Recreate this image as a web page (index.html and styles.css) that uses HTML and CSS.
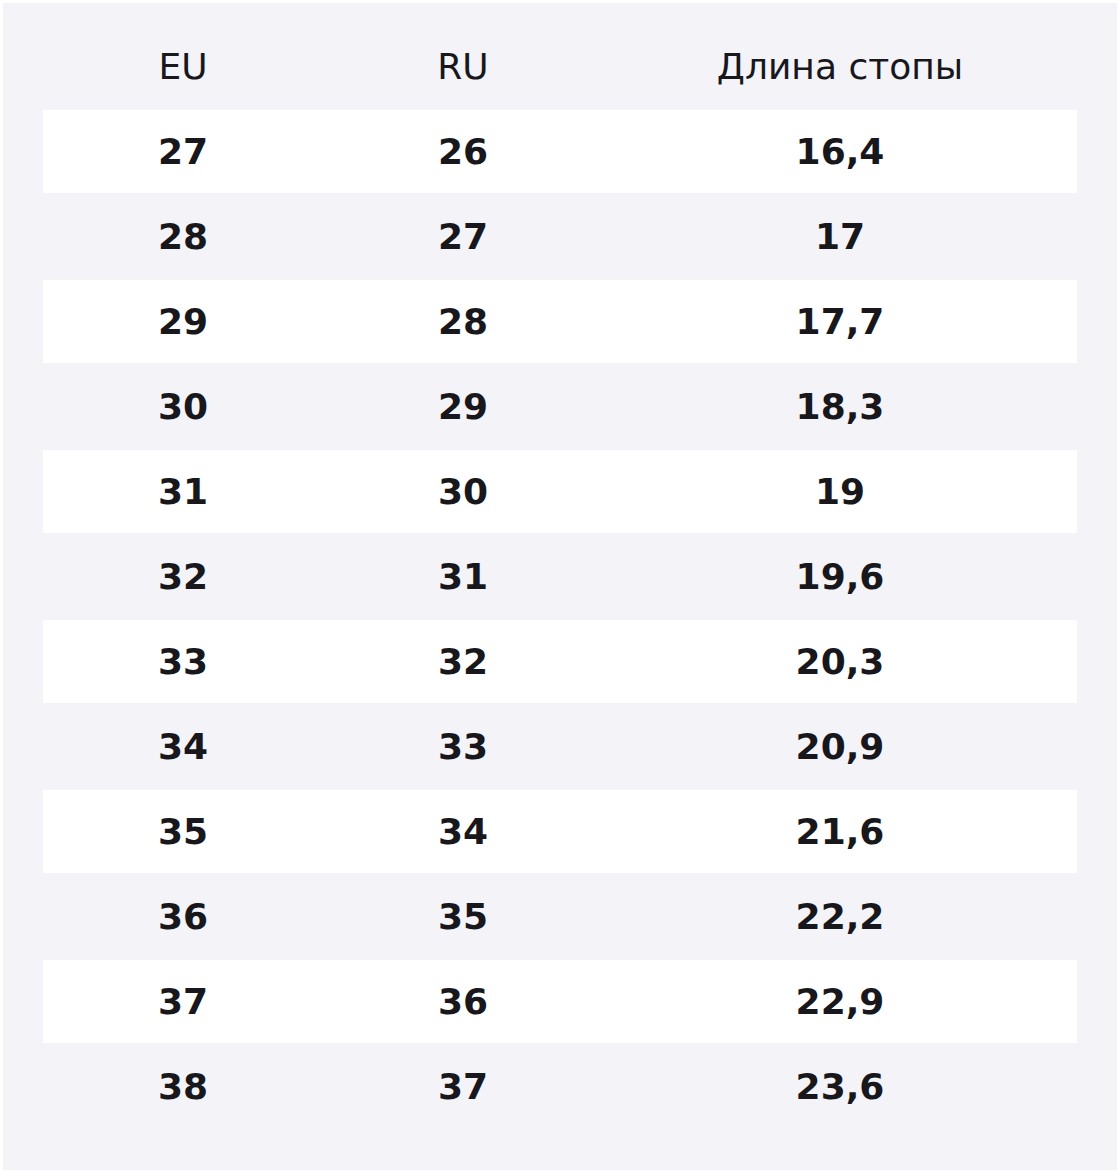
FILE: index.html
```html
<!DOCTYPE html>
<html lang="ru">
<head>
<meta charset="utf-8">
<title>Таблица размеров</title>
<link rel="stylesheet" href="styles.css">
</head>
<body>
<div class="panel">
  <div class="row head">
    <div class="cell">EU</div>
    <div class="cell">RU</div>
    <div class="cell">Длина стопы</div>
  </div>
  <div class="row white"><div class="cell">27</div><div class="cell">26</div><div class="cell">16,4</div></div>
  <div class="row"><div class="cell">28</div><div class="cell">27</div><div class="cell">17</div></div>
  <div class="row white"><div class="cell">29</div><div class="cell">28</div><div class="cell">17,7</div></div>
  <div class="row"><div class="cell">30</div><div class="cell">29</div><div class="cell">18,3</div></div>
  <div class="row white"><div class="cell">31</div><div class="cell">30</div><div class="cell">19</div></div>
  <div class="row"><div class="cell">32</div><div class="cell">31</div><div class="cell">19,6</div></div>
  <div class="row white"><div class="cell">33</div><div class="cell">32</div><div class="cell">20,3</div></div>
  <div class="row"><div class="cell">34</div><div class="cell">33</div><div class="cell">20,9</div></div>
  <div class="row white"><div class="cell">35</div><div class="cell">34</div><div class="cell">21,6</div></div>
  <div class="row"><div class="cell">36</div><div class="cell">35</div><div class="cell">22,2</div></div>
  <div class="row white"><div class="cell">37</div><div class="cell">36</div><div class="cell">22,9</div></div>
  <div class="row"><div class="cell">38</div><div class="cell">37</div><div class="cell">23,6</div></div>
</div>
</body>
</html>
```
FILE: styles.css
```css
html, body {
  background: #ffffff;
}
body {
  margin: 3px;
  font-family: "DejaVu Sans", Verdana, sans-serif;
  color: #17171c;
}
.panel {
  background: #f3f3f8;
  padding: 40px 40px 41px;
  display: flex;
  flex-direction: column;
}
.row {
  display: grid;
  grid-template-columns: 280px 280px 1fr;
  align-items: center;
  height: 85px;
  box-sizing: border-box;
  padding: 1px 0;
  background-clip: content-box;
  font-size: 36px;
  font-weight: bold;
  line-height: 42px;
}
.row.white {
  background-color: #ffffff;
}
.row.head {
  height: 66px;
  padding: 3px 0 0;
  align-items: start;
  font-weight: normal;
}
.cell {
  text-align: center;
}
```
